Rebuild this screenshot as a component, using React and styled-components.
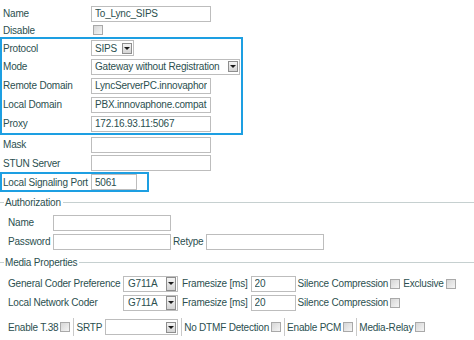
import styled, { createGlobalStyle } from "styled-components";

const Global = createGlobalStyle`
  body {
    margin: 0;
    background: #ffffff;
    font-family: "Liberation Sans", Arial, sans-serif;
    font-size: 10px;
    letter-spacing: -0.2px;
    color: #2b4f4f;
  }
`;

const Page = styled.div`
  padding-top: 4px;
  width: 474px;
`;
const Row = styled.div`
  display: flex;
  align-items: center;
  height: ${(p) => p.h || 19}px;
  padding-left: ${(p) => (p.pad === undefined ? 3 : p.pad)}px;
  white-space: nowrap;
`;
const Label = styled.span`
  width: ${(p) => p.w || 88}px;
  flex-shrink: 0;
`;
const Text = styled.span`
  margin-left: ${(p) => p.ml || 0}px;
`;
const TextBox = styled.input`
  width: ${(p) => p.w || 120}px;
  height: 16px;
  box-sizing: border-box;
  margin: 0 0 0 ${(p) => p.ml || 0}px;
  padding: 0 3px;
  border: 1px solid #bdbdbd;
  font: inherit;
  letter-spacing: inherit;
  color: inherit;
  background: #fff;
  outline: none;
`;
const SelectBox = styled.div`
  display: flex;
  align-items: center;
  justify-content: space-between;
  box-sizing: border-box;
  width: ${(p) => p.w}px;
  height: 16px;
  margin-left: ${(p) => p.ml || 0}px;
  padding: 0 1px 0 ${(p) => p.pl || 3}px;
  border: 1px solid #bdbdbd;
  background: #fff;
`;
const Arrow = styled.span`
  display: flex;
  align-items: center;
  justify-content: center;
  width: 10px;
  height: ${(p) => p.h || 11}px;
  box-sizing: border-box;
  border: 1px solid #8e8e8e;
  background: linear-gradient(#f4f4f4, #d4d4d4);
  &::after {
    content: "";
    border-left: 3px solid transparent;
    border-right: 3px solid transparent;
    border-top: 3px solid #1a1a1a;
  }
`;
const Check = styled.span`
  display: inline-block;
  width: 10px;
  height: 10px;
  box-sizing: border-box;
  margin-left: ${(p) => p.ml || 0}px;
  border: 1px solid #a9a9a9;
  background: linear-gradient(135deg, #d6d6d6, #f5f5f5);
`;
const Highlight = styled.div`
  width: ${(p) => p.w}px;
  box-sizing: border-box;
  border: 2px solid #1d9fe2;
`;
const Legend = styled.div`
  display: flex;
  align-items: center;
  height: 13px;
  margin: ${(p) => p.mt || 0}px 0 ${(p) => p.mb || 0}px;
  &::before {
    content: "";
    width: 4px;
    height: 1px;
    background: #c6d0d0;
  }
  &::after {
    content: "";
    flex: 1;
    height: 1px;
    background: #c6d0d0;
  }
  span {
    padding: 0 2px 0 1px;
  }
`;
const Item = styled.div`
  display: flex;
  align-items: center;
  height: 18px;
  padding: 0 3px 0 ${(p) => p.pl || 2}px;
  border-right: ${(p) => (p.last ? "none" : "1px solid #c9c9c9")};
`;

const Select = ({ value, w, ml, pl, ah }) => (
  <SelectBox w={w} ml={ml} pl={pl}>
    <span>{value}</span>
    <Arrow h={ah} />
  </SelectBox>
);

const App = () => {
  return (
    <Page>
      <Global />
      <Row>
        <Label>Name</Label>
        <TextBox readOnly value="To_Lync_SIPS" />
      </Row>
      <Row h={14}>
        <Label>Disable</Label>
        <Check ml={2} />
      </Row>
      <Highlight w={243}>
        <Row h={18} pad={1}>
          <Label>Protocol</Label>
          <Select value="SIPS" w={43} />
        </Row>
        <Row pad={1}>
          <Label>Mode</Label>
          <Select value="Gateway without Registration" w={149} />
        </Row>
        <Row pad={1}>
          <Label>Remote Domain</Label>
          <TextBox readOnly value="LyncServerPC.innovaphone.com" />
        </Row>
        <Row pad={1}>
          <Label>Local Domain</Label>
          <TextBox readOnly value="PBX.innovaphone.compat" />
        </Row>
        <Row pad={1}>
          <Label>Proxy</Label>
          <TextBox readOnly value="172.16.93.11:5067" />
        </Row>
      </Highlight>
      <Row>
        <Label>Mask</Label>
        <TextBox readOnly value="" />
      </Row>
      <Row h={18}>
        <Label>STUN Server</Label>
        <TextBox readOnly value="" />
      </Row>
      <Highlight w={149}>
        <Row h={16} pad={1}>
          <Label>Local Signaling Port</Label>
          <TextBox readOnly value="5061" w={46} />
        </Row>
      </Highlight>

      <Legend mt={4} mb={4}>
        <span>Authorization</span>
      </Legend>
      <Row pad={8}>
        <Label w={45}>Name</Label>
        <TextBox readOnly value="" w={118} />
      </Row>
      <Row pad={8}>
        <Label w={45}>Password</Label>
        <TextBox readOnly value="" w={118} />
        <Text ml={2}>Retype</Text>
        <TextBox readOnly value="" w={118} ml={2} />
      </Row>

      <Legend mt={5} mb={5}>
        <span>Media Properties</span>
      </Legend>
      <Row pad={8}>
        <Label w={115}>General Coder Preference</Label>
        <Select value="G711A" w={55} pl={4} ah={14} />
        <Text ml={4}>Framesize [ms]</Text>
        <TextBox readOnly value="20" w={45} ml={3} />
        <Text ml={2}>Silence Compression</Text>
        <Check ml={2} />
        <Text ml={3}>Exclusive</Text>
        <Check ml={2} />
      </Row>
      <Row pad={8}>
        <Label w={115}>Local Network Coder</Label>
        <Select value="G711A" w={55} pl={4} ah={14} />
        <Text ml={4}>Framesize [ms]</Text>
        <TextBox readOnly value="20" w={45} ml={3} />
        <Text ml={2}>Silence Compression</Text>
        <Check ml={2} />
      </Row>
      <Row h={20} pad={0} style={{ marginTop: 5 }}>
        <Item pl={8}>
          <Text>Enable T.38</Text>
          <Check ml={2} />
        </Item>
        <Item>
          <Text>SRTP</Text>
          <Select value="" w={73} ml={3} />
        </Item>
        <Item>
          <Text>No DTMF Detection</Text>
          <Check ml={2} />
        </Item>
        <Item>
          <Text>Enable PCM</Text>
          <Check ml={2} />
        </Item>
        <Item last>
          <Text>Media-Relay</Text>
          <Check ml={2} />
        </Item>
      </Row>
    </Page>
  );
};

export default App;
